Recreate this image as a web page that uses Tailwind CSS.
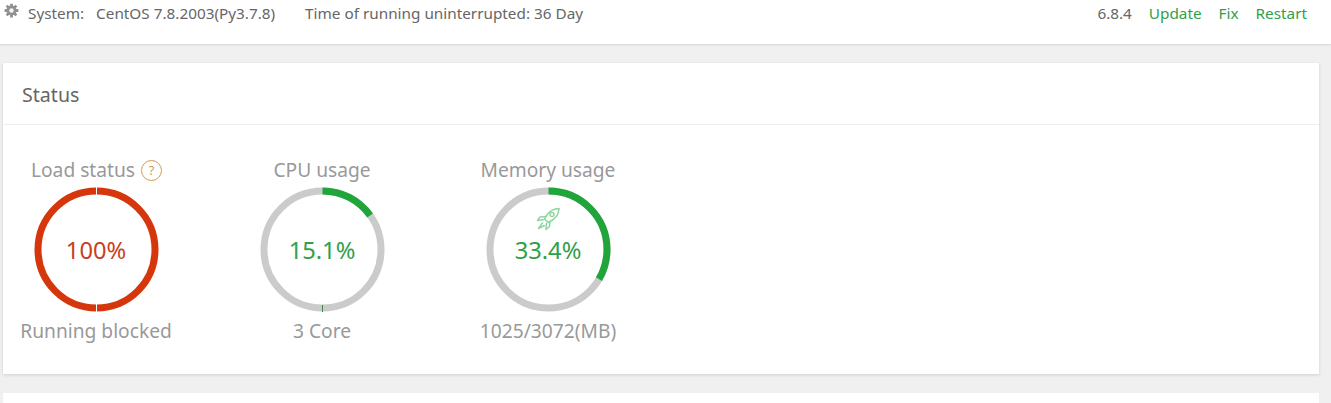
<!DOCTYPE html>
<html>
<head>
<meta charset="utf-8">
<script src="https://cdn.jsdelivr.net/npm/@tailwindcss/browser@4"></script>
</head>
<body class="m-0 h-[403px] w-[1331px] overflow-hidden bg-[#f0f0f0] font-['Noto_Sans','Open_Sans',sans-serif]">
<header class="flex h-[44px] items-start justify-between bg-white pl-[4px] pr-[24px] pt-[3px] text-[15.3px] leading-[20px] text-[#666] shadow-[0_1px_2px_rgba(0,0,0,0.12)]">
  <div class="flex items-start">
    <svg class="mt-[0px] h-[15px] w-[15px]" viewBox="0 0 24 24" fill="#909090"><circle cx="12" cy="12" r="8"/><g stroke="#909090" stroke-width="4.500"><path d="M12 1v22M1 12h22M4.200 4.200l15.600 15.600M19.800 4.200 4.200 19.800"/></g><circle cx="12" cy="12" r="3.600" fill="#f4f4f4"/></svg>
    <span class="ml-[9px]">System:</span>
    <span class="ml-[12px]">CentOS 7.8.2003(Py3.7.8)</span>
    <span class="ml-[30px]">Time of running uninterrupted: 36 Day</span>
  </div>
  <div class="flex items-start">
    <span>6.8.4</span>
    <a class="ml-[17px] text-[#2fa04a]">Update</a>
    <a class="ml-[17px] text-[#2fa04a]">Fix</a>
    <a class="ml-[17px] text-[#2fa04a]">Restart</a>
  </div>
</header>

<main class="ml-[3px] mt-[19px] w-[1316px]">
  <section class="h-[311px] bg-white shadow-[0_1px_3px_rgba(0,0,0,0.14)]">
    <h2 class="flex h-[62px] items-center border-b border-[#eee] pl-[19px] pt-[2px] text-[19.6px] font-normal text-[#666]">Status</h2>
    <div class="flex gap-[76px] pl-[18px] pt-[32px] text-[19.2px] leading-[26px] text-[#999]">

      <div class="flex w-[150px] flex-col items-center">
        <div class="flex h-[26px] items-center whitespace-nowrap pl-[1px]">Load status
          <span class="ml-[6px] flex h-[21px] w-[21px] items-center justify-center rounded-full border border-[#d09a4e] text-[13px] leading-none text-[#d09a4e]">?</span>
        </div>
        <div class="relative mt-[4px] flex h-[125px] w-[125px] items-center justify-center">
          <svg class="absolute inset-0" viewBox="0 0 125 125"><circle cx="62.500" cy="62.500" r="58.500" fill="none" stroke="#d6360b" stroke-width="7"/><path d="M62.500 0v8M62.500 117v8" stroke="#fff" stroke-width="1"/></svg>
          <span class="pt-[2px] text-[23.7px] leading-none text-[#c7401c]">100%</span>
        </div>
        <div class="mt-[6px] whitespace-nowrap">Running blocked</div>
      </div>

      <div class="flex w-[150px] flex-col items-center">
        <div class="h-[26px] whitespace-nowrap">CPU usage</div>
        <div class="relative mt-[4px] flex h-[125px] w-[125px] items-center justify-center">
          <svg class="absolute inset-0 -rotate-90" viewBox="0 0 125 125"><circle cx="62.500" cy="62.500" r="58.500" fill="none" stroke="#cbcbcb" stroke-width="7"/><circle cx="62.500" cy="62.500" r="58.500" fill="none" stroke="#20a53a" stroke-width="7" stroke-dasharray="55.500 400"/></svg>
          <div class="absolute bottom-0 left-[62px] h-[7px] w-px bg-[#3a8a4a]"></div>
          <span class="pt-[2px] text-[23.7px] leading-none text-[#2fa04a]">15.1%</span>
        </div>
        <div class="mt-[6px] whitespace-nowrap">3 Core</div>
      </div>

      <div class="flex w-[150px] flex-col items-center">
        <div class="h-[26px] whitespace-nowrap">Memory usage</div>
        <div class="relative mt-[4px] flex h-[125px] w-[125px] items-center justify-center">
          <svg class="absolute inset-0 -rotate-90" viewBox="0 0 125 125"><circle cx="62.500" cy="62.500" r="58.500" fill="none" stroke="#cbcbcb" stroke-width="7"/><circle cx="62.500" cy="62.500" r="58.500" fill="none" stroke="#20a53a" stroke-width="7" stroke-dasharray="122.800 400"/></svg>
          <svg class="absolute left-[50px] top-[20px] h-[24px] w-[25px]" viewBox="0 0 25 24" fill="none" stroke="#8fd6a0" stroke-width="1.500" stroke-linejoin="round" stroke-linecap="round"><path d="M23 1.500c-5.500.3-9.500 2.500-12 6.500l-2.500 4 4 3.500 4-2.500c4-2.500 6.200-6.500 6.500-11.500z"/><circle cx="16" cy="7.500" r="2"/><path d="M9.500 9.500 4 10l-2.500 3.500 6-.8M14 14.500l-.5 5-3.500 3 .6-6.500M6.500 16 2.500 21.500 8.500 18.500"/></svg>
          <span class="pt-[2px] text-[23.7px] leading-none text-[#2fa04a]">33.4%</span>
        </div>
        <div class="mt-[6px] whitespace-nowrap">1025/3072(MB)</div>
      </div>
    </div>
  </section>
  <section class="mt-[19px] h-[10px] bg-white"></section>
</main>
</body>
</html>
